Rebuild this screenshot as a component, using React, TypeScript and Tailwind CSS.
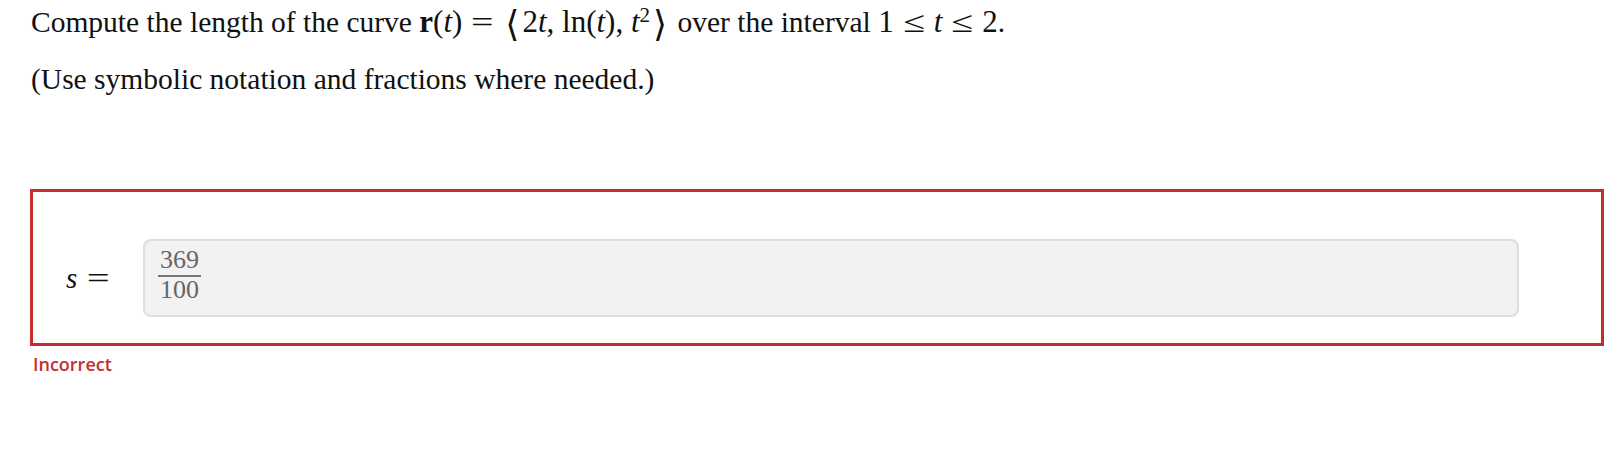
export default function App() {
  return (
    <div className="min-h-screen bg-white font-['Liberation_Serif',serif] text-[#111]">
      <div className="pl-[31px] pt-[4px]">
        <p className="h-[36px] whitespace-nowrap text-[29.5px] leading-[36px]">
          Compute the length of the curve{" "}
          <span className="text-[31px]">
            <b>r</b>(<i>t</i>)
          </span>
          <Rel>=</Rel>
          <Bracket char="⟨" />
          <span className="text-[31px]">
            2<i>t</i>, ln(<i>t</i>), <i>t</i>
            <sup className="text-[21px]">2</sup>
          </span>
          <Bracket char="⟩" /> over the interval{" "}
          <span className="text-[31px]">1</span>
          <Rel>≤</Rel>
          <i className="text-[31px]">t</i>
          <Rel>≤</Rel>
          <span className="text-[31px]">2</span>.
        </p>
        <p className="mt-[21px] whitespace-nowrap text-[29.5px] leading-[36px]">
          (Use symbolic notation and fractions where needed.)
        </p>
      </div>

      <div className="ml-[30px] mr-[8px] mt-[92px] flex items-center border-[3px] border-[#c62e2e] pt-[47px] pb-[26px]">
        <div className="w-[110px] shrink-0 pl-[33px] text-[29px] leading-none whitespace-nowrap">
          <i>s</i>
          <span className="ml-[13px] inline-block scale-x-[1.4]">=</span>
        </div>
        <div className="mr-[82px] h-[78px] flex-1 rounded-[8px] border-2 border-[#dedede] bg-[#f2f2f2] pl-[13px] pt-[6px]">
          <div className="inline-flex flex-col items-center text-[26px] text-[#666]">
            <span className="px-[2px] leading-[26px]">369</span>
            <span className="mt-[2px] h-[1.5px] w-full bg-[#777]" />
            <span className="px-[2px] leading-[26px]">100</span>
          </div>
        </div>
      </div>

      <p className="ml-[33px] mt-[5px] font-['Open_Sans',sans-serif] text-[18px] font-semibold text-[#c62e2e]">
        Incorrect
      </p>
    </div>
  );
}

function Rel({ children }: { children: string }) {
  return (
    <span className="mx-[8px] inline-block w-[24px] text-center">
      <span className="inline-block scale-x-[1.35]">{children}</span>
    </span>
  );
}

function Bracket({ char }: { char: string }) {
  return (
    <span className="mx-[3px] inline-block align-[-4px] font-['DejaVu_Serif',serif] text-[36px] leading-none">
      {char}
    </span>
  );
}
